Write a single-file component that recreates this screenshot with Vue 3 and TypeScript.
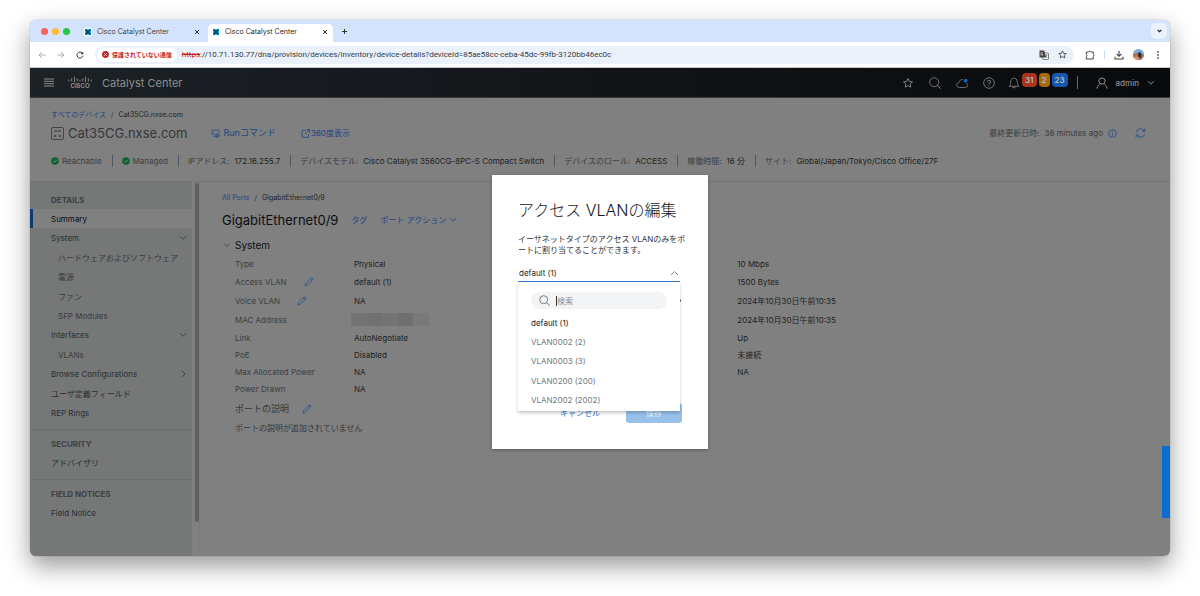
<script setup lang="ts">
import { ref } from 'vue'

interface NavItem { label: string; sub?: boolean; chevron?: 'down' | 'right' }
interface Row { label: string; value: string; extra: string; edit?: boolean; tall?: boolean; masked?: boolean }

const details: NavItem[] = [
  { label: 'Summary' },
  { label: 'System', chevron: 'down' },
  { label: 'ハードウェアおよびソフトウェア', sub: true },
  { label: '電源', sub: true },
  { label: 'ファン', sub: true },
  { label: 'SFP Modules', sub: true },
  { label: 'Interfaces', chevron: 'down' },
  { label: 'VLANs', sub: true },
  { label: 'Browse Configurations', chevron: 'right' },
  { label: 'ユーザ定義フィールド' },
  { label: 'REP Rings' },
]

const rows: Row[] = [
  { label: 'Type', value: 'Physical', extra: '10 Mbps' },
  { label: 'Access VLAN', value: 'default (1)', extra: '1500 Bytes', edit: true, tall: true },
  { label: 'Voice VLAN', value: 'NA', extra: '2024年10月30日午前10:35', edit: true, tall: true },
  { label: 'MAC Address', value: '', extra: '2024年10月30日午前10:35', tall: true, masked: true },
  { label: 'Link', value: 'AutoNegotiate', extra: 'Up' },
  { label: 'PoE', value: 'Disabled', extra: '未接続' },
  { label: 'Max Allocated Power', value: 'NA', extra: 'NA' },
  { label: 'Power Drawn', value: 'NA', extra: '' },
]

const facts = [
  { label: 'IPアドレス:', value: '172.16.255.7' },
  { label: 'デバイスモデル:', value: 'Cisco Catalyst 3560CG-8PC-S Compact Switch' },
  { label: 'デバイスのロール:', value: 'ACCESS' },
  { label: '稼働時間:', value: '16 分' },
  { label: 'サイト:', value: 'Global/Japan/Tokyo/Cisco Office/27F' },
]

const vlans = ['default (1)', 'VLAN0002 (2)', 'VLAN0003 (3)', 'VLAN0200 (200)', 'VLAN2002 (2002)']
const selected = ref(vlans[0])
const query = ref('')
const pick = (v: string) => { selected.value = v }
</script>

<template>
  <div class="desktop">
    <div class="window">
      <div class="tabs">
        <div class="lights"><i class="red"></i><i class="amber"></i><i class="green"></i></div>
        <div v-for="n in 2" :key="n" class="tab" :class="{ active: n === 2 }">
          <svg class="favicon" viewBox="0 0 8 8"><rect width="8" height="8" fill="#fff" /><rect x="1" y="1" width="6" height="6" fill="#12a5d6" /><path d="M1.6 1.6 3.2 3.2M6.4 1.6 4.8 3.2M1.6 6.4 3.2 4.8M6.4 6.4 4.8 4.8" stroke="#0b2a4a" stroke-width="1.2" /><rect x="3" y="3" width="2" height="2" fill="#0b2a4a" /></svg>
          <span class="tab-title">Cisco Catalyst Center</span>
          <button class="plain" aria-label="Close tab"><svg width="6" height="6" viewBox="0 0 6 6"><path d="M1 1l4 4M5 1 1 5" stroke="#333" /></svg></button>
        </div>
        <button class="plain new-tab" aria-label="New tab"><svg width="7" height="7" viewBox="0 0 7 7"><path d="M3.5 1v5M1 3.5h5" stroke="#333" /></svg></button>
        <button class="tab-menu" aria-label="Search tabs"><svg width="5" height="4" viewBox="0 0 5 4"><path d="M.7 1l1.8 1.7L4.3 1" fill="none" stroke="#222" stroke-width="1.2" /></svg></button>
      </div>

      <div class="toolbar">
        <button class="plain" aria-label="Back"><svg width="8" height="8" viewBox="0 0 8 8"><path d="M7.5 4H1M4 1 1 4l3 3" fill="none" stroke="#a5a5a5" stroke-width=".9" /></svg></button>
        <button class="plain" aria-label="Forward"><svg width="8" height="8" viewBox="0 0 8 8"><path d="M.5 4H7M4 1l3 3-3 3" fill="none" stroke="#a5a5a5" stroke-width=".9" /></svg></button>
        <button class="plain" aria-label="Reload"><svg width="8" height="8" viewBox="0 0 8 8"><path d="M6.4 2.2A3 3 0 1 0 7 4.6" fill="none" stroke="#333" /><path d="M7.2.6v2.7H4.5z" fill="#333" /></svg></button>
        <div class="address">
          <button class="insecure"><svg width="7" height="7" viewBox="0 0 7 7"><circle cx="3.5" cy="3.5" r="3.4" fill="#c5221f" /><path d="M2.3 2.3l2.4 2.4M4.7 2.3 2.3 4.7" stroke="#fff" stroke-width=".9" /></svg>保護されていない通信</button>
          <span class="url"><s>https</s>://10.71.130.77/dna/provision/devices/inventory/device-details?deviceId=85ae58cc-ceba-45dc-99fb-3120bb46ec0c</span>
          <button class="plain" aria-label="Translate"><svg width="10" height="10" viewBox="0 0 10 10"><rect x="3.8" y="3" width="5.7" height="6.4" rx=".6" fill="#fff" stroke="#555" stroke-width=".8" /><path d="M.5.5h4.7l2 6.9H.5z" fill="#444" /><path d="M4 3a1.3 1.3 0 1 0 .1 1.6H3" fill="none" stroke="#fff" stroke-width=".6" /><path d="M6.7 5h2M7.7 4.4V5L6.7 7.5M7 6l1.5 1.8" fill="none" stroke="#555" stroke-width=".5" /></svg></button>
          <button class="plain" aria-label="Bookmark"><svg width="9" height="9" viewBox="0 0 9 9"><path d="M4.5.9l1.1 2.4 2.6.3-1.9 1.7.5 2.6-2.3-1.3-2.3 1.3.5-2.6L.8 3.6l2.6-.3z" fill="none" stroke="#333" stroke-width=".8" /></svg></button>
        </div>
        <div class="tools">
          <button class="plain" aria-label="Extensions"><svg width="10" height="10" viewBox="0 0 10 10"><path d="M1.3 2h2.2a1.2 1.2 0 0 1 2.2 0h2.5v2.3a1.2 1.2 0 0 1 0 2.2V9H1.3V6.700a1.300 1.300 0 0 0 0-2.400z" fill="none" stroke="#444" /></svg></button>
          <i class="tool-sep"></i>
          <button class="plain" aria-label="Downloads"><svg width="10" height="10" viewBox="0 0 10 10"><path d="M5 .8v5.4M2.7 4 5 6.3 7.3 4M1 6.8V9h8V6.8" fill="none" stroke="#444" stroke-width="1.1" /></svg></button>
          <button class="plain" aria-label="Profile"><svg width="11" height="11" viewBox="0 0 11 11"><defs><clipPath id="face"><circle cx="5.5" cy="5.5" r="5.5" /></clipPath></defs><g clip-path="url(#face)"><rect width="11" height="11" fill="#79a9da" /><path d="M0 5.3 4 4l7 1.8V11H0z" fill="#b46e4e" /><path d="M4.8 4.5 6.5 3l1.7 1.3.5 2.7L7.3 9.5 5.5 7.5z" fill="#302d3b" /><path d="M0 8.5 4.5 7.5 6 11H0z" fill="#d69b7d" /></g></svg></button>
          <button class="plain more" aria-label="Menu"><svg width="4" height="10" viewBox="0 0 4 10"><circle cx="2" cy="2" r=".8" /><circle cx="2" cy="5" r=".8" /><circle cx="2" cy="8" r=".8" /></svg></button>
        </div>
      </div>

      <div class="app">
        <header class="topbar">
          <button class="plain" aria-label="Navigation"><svg width="10" height="9" viewBox="0 0 10 9"><path d="M0 1h10M0 3.3h10M0 5.7h10M0 8h10" stroke="#8b8d8f" /></svg></button>
          <div class="logo">
            <svg width="24" height="7" viewBox="0 0 24 7"><path d="M.8 4v1M3.6 2.7v2.3M6.4 1v4.8M9.2 2.7v2.3M12 4v1M14.8 2.7v2.3M17.6 1v4.8M20.4 2.7v2.3M23.2 4v1" stroke="#85878a" stroke-width="1" stroke-linecap="round" /></svg>
            <span>CISCO</span>
          </div>
          <span class="product">Catalyst Center</span>
          <div class="top-icons">
            <button class="plain" aria-label="Favorites"><svg width="12" height="12" viewBox="0 0 12 12"><path d="M6 1.5l1.3 3 3.2.3-2.4 2.2.7 3.2L6 8.6l-2.8 1.6.7-3.2-2.4-2.2 3.2-.3z" fill="none" stroke="#8a8c8e" stroke-width=".9" /></svg></button>
            <button class="plain" aria-label="Search"><svg width="12" height="12" viewBox="0 0 12 12"><circle cx="5.2" cy="5.2" r="4.5" fill="none" stroke="#8a8c8e" stroke-width=".8" /><path d="M8.5 8.5l3.2 3.2" stroke="#8a8c8e" /></svg></button>
            <button class="plain" aria-label="Cloud"><svg width="12" height="12" viewBox="0 0 12 12"><path d="M6.9 2.6A3.2 3.2 0 0 0 3.1 5.5 2.5 2.5 0 0 0 3.3 10.5h6A2.4 2.4 0 0 0 10.8 6.2" fill="none" stroke="#7e8082" stroke-width=".8" /><circle cx="9.7" cy="3.7" r="1.9" fill="#1460bd" /></svg></button>
            <button class="plain" aria-label="Help"><svg width="12" height="12" viewBox="0 0 12 12"><circle cx="6" cy="6" r="5.3" fill="none" stroke="#8a8c8e" stroke-width=".8" /><path d="M4.4 4.9A1.6 1.6 0 1 1 6 6.4v.9M6 8.2v1" fill="none" stroke="#8a8c8e" stroke-width=".9" /></svg></button>
            <button class="plain alerts" aria-label="Notifications"><svg width="12" height="12" viewBox="0 0 12 12"><path d="M1 9.3c1.5-1 1.5-2.3 1.7-4.3C2.9 2.5 4 1.1 6 1.1S9.1 2.5 9.3 5c.2 2 .2 3.3 1.7 4.3zM4.6 9.5a1.4 1.4 0 0 0 2.8 0" fill="none" stroke="#8a8c8e" stroke-width=".8" /></svg><span class="badges"><b class="b-red">31</b><b class="b-amber">2</b><b class="b-blue">23</b></span></button>
            <i class="top-sep"></i>
            <button class="plain user"><svg width="12" height="12" viewBox="0 0 12 12"><circle cx="6" cy="4" r="3.1" fill="none" stroke="#9a9c9e" stroke-width=".9" /><path d="M.9 11.6C1.5 8.9 3 7.3 4.4 6.7M11.1 11.6C10.5 8.9 9 7.3 7.6 6.7" fill="none" stroke="#9a9c9e" stroke-width=".9" /></svg><span>admin</span><svg width="8" height="6" viewBox="0 0 8 6"><path d="M1 1.2l3 3 3-3" fill="none" stroke="#9a9c9e" stroke-width=".9" /></svg></button>
          </div>
        </header>

        <section class="device">
          <nav class="crumbs"><a href="#">すべてのデバイス</a><span>/</span><span class="here">Cat35CG.nxse.com</span></nav>
          <div class="device-title">
            <svg width="13" height="13" viewBox="0 0 13 13"><rect x=".5" y=".5" width="12" height="12" rx="1.5" fill="none" stroke="#3b3e41" stroke-width=".9" /><path d="M3 4h2.5M7.5 4H10M3 9h2.5M7.5 9H10" stroke="#3b3e41" stroke-width=".8" /><path d="M4.6 2.5 6.3 4 4.6 5.5zM8.7 2.5 7 4l1.7 1.5zM4.5 7.5 2.7 9l1.8 1.5zM8.6 7.5 10.4 9l-1.8 1.5z" fill="#3b3e41" /></svg>
            <h1>Cat35CG.nxse.com</h1>
            <a class="run" href="#"><svg width="9" height="9" viewBox="0 0 9 9"><path d="M3.5 5.5H1V1h7v3" fill="none" stroke="#1d4680" stroke-width=".7" /><path d="M2.4 3.5 4 4.7M4.5 6l1 1.5M2.500 7.500h2" stroke="#1d4680" stroke-width=".7" /><circle cx="6.5" cy="6.5" r="1.8" fill="#4b6483" stroke="#1d4680" stroke-width=".7" /></svg>Runコマンド</a>
            <a class="view360" href="#"><svg width="9" height="9" viewBox="0 0 9 9"><path d="M4.5 1.5H1v6.8h6.5V5M5.5.6h3v3M8.4.7 4 5" fill="none" stroke="#1d4680" stroke-width=".8" /></svg>360度表示</a>
            <div class="updated">最終更新日時:<span>36 minutes ago</span>
              <svg width="9" height="9" viewBox="0 0 9 9"><circle cx="4.5" cy="4.5" r="3.8" fill="none" stroke="#1a4d8c" stroke-width=".8" /><path d="M4.5 4v2.5M4.5 2.4v.9" stroke="#1a4d8c" stroke-width=".8" /></svg>
              <button class="plain" aria-label="Refresh"><svg width="11" height="10" viewBox="0 0 11 10"><path d="M1.3 4.2A4.2 4.2 0 0 1 9 2.7M9.7 5.8A4.2 4.2 0 0 1 2 7.3M9.9.3v2.9H7M1.1 9.7V6.8H4" fill="none" stroke="#1a4d8c" stroke-width=".8" /></svg></button>
            </div>
          </div>
          <div class="facts">
            <span v-for="s in ['Reachable', 'Managed']" :key="s" class="fact state"><svg width="8" height="8" viewBox="0 0 8 8"><circle cx="4" cy="4" r="3.8" fill="#0c6230" /><path d="M2.2 4l1.3 1.3 2.3-2.5" fill="none" stroke="#7d9c86" stroke-width=".9" /></svg>{{ s }}</span>
            <span v-for="f in facts" :key="f.label" class="fact">{{ f.label }}<em>{{ f.value }}</em></span>
          </div>
        </section>

        <div class="body">
          <aside class="side">
            <h2>DETAILS</h2>
            <ul class="nav">
              <li v-for="(d, i) in details" :key="d.label" :class="{ current: i === 0 }">
                <a href="#" :class="{ sub: d.sub }">{{ d.label }}</a>
                <svg v-if="d.chevron === 'down'" width="8" height="6" viewBox="0 0 8 6"><path d="M1 1.3l3 3 3-3" fill="none" stroke="#34373a" stroke-width=".8" /></svg>
                <svg v-if="d.chevron === 'right'" width="8" height="8" viewBox="0 0 8 8"><path d="M3 1l3 3-3 3" fill="none" stroke="#34373a" stroke-width=".8" /></svg>
              </li>
            </ul>
            <div class="group"><h2>SECURITY</h2><a href="#">アドバイザリ</a></div>
            <div class="group"><h2>FIELD NOTICES</h2><a href="#">Field Notice</a></div>
          </aside>
          <div class="scroll"><i></i></div>

          <main class="content">
            <nav class="crumbs"><a href="#">All Ports</a><span>/</span><span class="here">GigabitEthernet0/9</span></nav>
            <div class="port">
              <h2>GigabitEthernet0/9</h2>
              <a href="#">タグ</a>
              <a href="#" class="action">ポート アクション<svg width="8" height="6" viewBox="0 0 8 6"><path d="M1 1.2l3 3 3-3" fill="none" stroke="#1d4680" stroke-width=".9" /></svg></a>
            </div>
            <h3><svg width="6" height="5" viewBox="0 0 6 5"><path d="M.6 1l2.4 2.4L5.4 1" fill="none" stroke="#34373a" stroke-width=".8" /></svg>System</h3>
            <table>
              <tbody>
                <tr v-for="r in rows" :key="r.label" :class="{ tall: r.tall }">
                  <th scope="row"><div class="cell">{{ r.label }}<button v-if="r.edit" class="plain" :aria-label="'Edit ' + r.label"><svg width="10" height="10" viewBox="0 0 10 10"><path d="M1 9l.7-2.5L7 1.2q.9-.7 1.5.2.8.7.2 1.4L3.4 8.2zM6.2 2l1.7 1.7" fill="none" stroke="#1f4f8f" stroke-width=".8" /></svg></button></div></th>
                  <td><span v-if="r.masked" class="mask"><i v-for="k in 5" :key="k"></i></span><template v-else>{{ r.value }}</template></td>
                  <td>{{ r.extra }}</td>
                </tr>
              </tbody>
            </table>
            <div class="desc">
              <h4>ポートの説明<button class="plain" aria-label="Edit description"><svg width="10" height="10" viewBox="0 0 10 10"><path d="M1 9l.7-2.5L7 1.2q.9-.7 1.5.2.8.7.2 1.4L3.4 8.2zM6.2 2l1.7 1.7" fill="none" stroke="#1f4f8f" stroke-width=".8" /></svg></button></h4>
              <p>ポートの説明が追加されていません</p>
            </div>
          </main>
        </div>

        <button class="feedback" aria-label="Feedback"></button>

        <div class="overlay">
          <div class="modal" role="dialog" aria-labelledby="dlg-title">
            <h2 id="dlg-title">アクセス VLANの編集</h2>
            <p>イーサネットタイプのアクセス VLANのみをポ<br>ートに割り当てることができます。</p>
            <div class="picker">
              <button class="value" role="combobox" aria-expanded="true" aria-controls="vlan-list">{{ selected }}<svg width="9" height="6" viewBox="0 0 9 6"><path d="M1 5l3.5-3.5L8 5" fill="none" stroke="#6b7075" stroke-width=".8" /></svg></button>
              <div class="menu">
                <label class="search"><svg width="11" height="11" viewBox="0 0 11 11"><circle cx="4.7" cy="4.7" r="4" fill="none" stroke="#6b7075" stroke-width=".9" /><path d="M7.6 7.6l3 3" stroke="#6b7075" stroke-width=".9" /></svg><i class="caret"></i><input v-model="query" type="text" placeholder="検索" aria-label="検索"></label>
                <ul id="vlan-list" role="listbox">
                  <li v-for="v in vlans" :key="v" role="option" :aria-selected="v === selected" :class="{ on: v === selected }" @click="pick(v)">{{ v }}</li>
                </ul>
              </div>
              <i class="dot"></i>
            </div>
            <div class="buttons"><button class="cancel">キャンセル</button><button class="save">保存</button></div>
          </div>
        </div>
      </div>
    </div>
  </div>
</template>

<style>
body { margin: 0; background: #fff; }
</style>

<style scoped>
* { box-sizing: border-box; }
.desktop { min-height: 100vh; padding: 20px 30px 40px; display: flex; font: 8px/12px "Inter", "Noto Sans CJK JP", sans-serif; color: #2d3033; }
.window { flex: 1; display: flex; flex-direction: column; border-radius: 6px; overflow: hidden; background: #fff; box-shadow: 0 0 1px rgba(0,0,0,.5), 0 10px 24px rgba(0,0,0,.4); }
svg { display: block; flex: none; }
h1, h2, h3, h4, p, ul { margin: 0; padding: 0; list-style: none; font-weight: 400; }
a { color: #1d4680; text-decoration: none; }
button { font: inherit; color: inherit; cursor: pointer; }
.plain { display: flex; align-items: center; padding: 0; border: 0; background: none; }

.tabs { height: 22px; display: flex; align-items: center; background: #d3e3fd; padding: 0 3px 0 11px; font-size: 7px; }
.lights { display: flex; gap: 4px; width: 39px; }
.lights i { width: 7px; height: 7px; border-radius: 50%; }
.red { background: #ff5f57; } .amber { background: #febc2e; } .green { background: #28c840; }
.tab { width: 128px; height: 18px; align-self: flex-end; display: flex; align-items: center; padding: 0 8px 3px 4px; gap: 5px; color: #3c4043; }
.tab.active { width: 125px; background: #fff; border-radius: 5px 5px 0 0; color: #1f1f1f; padding-right: 5px; }
.tab-title { flex: 1; }
.favicon { width: 8px; height: 8px; }
.new-tab { margin-left: 8px; }
.tab-menu { margin-left: auto; width: 16px; height: 16px; border: 0; border-radius: 5px; background: #ebf1fd; display: flex; align-items: center; justify-content: center; padding: 0; }

.toolbar { height: 26px; display: flex; align-items: center; padding: 0 10px 0 8px; gap: 11px; border-bottom: 1px solid #c8c8c8; }
.address { flex: 1; height: 18px; border-radius: 9px; background: #ebf1fb; display: flex; align-items: center; padding: 0 7px 0 2px; gap: 9px; font-size: 7px; }
.insecure { height: 14px; border: 0; border-radius: 7px; background: #fff; color: #c5221f; display: flex; align-items: center; gap: 3px; padding: 0 5px; font-size: 6px; font-weight: 700; }
.url { flex: 1; color: #37393c; margin-left: -4px; font: 8px/12px "Roboto", sans-serif; white-space: nowrap; }
.url s { color: #c5221f; }
.tools { display: flex; align-items: center; gap: 9px; }
.more { margin-left: 3px; }
.tool-sep { width: 1px; height: 9px; background: #c6dafb; }

.app { flex: 1; position: relative; display: flex; flex-direction: column; background: #808080; }
.topbar { height: 30px; display: flex; align-items: center; padding: 0 15px 0 14px; background: linear-gradient(90deg, #1c2226, #121418 50%, #080a0b); border-bottom: 1px solid #3a3a3a; color: #8e9092; }
.logo { margin: 0 10px 0 14px; display: flex; flex-direction: column; align-items: center; font: 700 6px/6px "Inter", sans-serif; }
.product { font-size: 11px; }
.top-icons { margin-left: auto; display: flex; align-items: center; gap: 15px; }
.alerts { gap: 2px; margin-left: -2px; }
.badges { display: flex; gap: 2px; margin-bottom: 5px; }
.badges b { height: 14px; padding: 0 3px; border-radius: 4px; color: #b8babb; font-size: 8px; font-weight: 600; line-height: 14px; }
.b-red { background: #a93521; } .b-amber { background: #a8690c; } .b-blue { background: #1659ac; }
.top-sep { width: 1px; height: 13px; background: #66686a; margin: 0 3px 0 -6px; }
.user { gap: 8px; font-weight: 500; }

.device { height: 84px; border-bottom: 1px solid #747474; padding: 11px 21px 0; display: flex; flex-direction: column; color: #3b3e41; }
.crumbs { display: flex; gap: 5px; font-size: 7px; }
.here { color: #202326; }
.device-title { display: flex; align-items: center; height: 24px; }
h1 { font-size: 13px; line-height: 20px; margin-left: 4px; color: #34373a; }
.run, .view360 { display: flex; align-items: center; gap: 4px; font-size: 9px; margin-left: 23px; }
.view360 { font-size: 8px; gap: 1px; margin-left: 25px; }
.updated { margin-left: auto; display: flex; align-items: center; gap: 5px; padding-right: 3px; }
.updated .plain { margin-left: 13px; }
.facts { display: flex; align-items: center; margin-top: 10px; }
.fact { display: flex; align-items: center; gap: 5px; white-space: nowrap; }
.fact + .fact { margin-left: 10px; padding-left: 9px; border-left: 1px solid #55585a; }
.fact.state { gap: 3px; }
em { font-style: normal; color: #1c1f21; }

.body { flex: 1; display: flex; }
.side { width: 162px; background: #757877; padding-top: 11px; }
.side h2 { padding-left: 21px; font-size: 8px; font-weight: 700; line-height: 14px; color: #3d4043; }
.nav { margin-top: 2px; min-height: 214px; display: grid; grid-auto-rows: 1fr; }
.nav li { display: flex; align-items: center; justify-content: space-between; padding: 0 5px 0 21px; }
.side a { color: #2b2e31; }
.side a.sub { padding-left: 7px; color: #383b3e; }
.nav .current { background: #808080; border-left: 3px solid #0e3a73; padding-left: 18px; }
.nav .current a { color: #0c0e10; }
.group { border-top: 1px solid #6a6d6c; margin-top: 6px; padding-top: 7px; height: 44px; }
.group a { display: block; padding: 6px 0 0 21px; }
.scroll { width: 8px; padding: 1px 1px 0 3px; border-right: 1px solid #7a7a7a; }
.scroll i { display: block; width: 4px; height: 339px; border-radius: 2px; background: #5f5f5f; }

.content { flex: 1; padding: 10px 0 0 22px; }
.port { display: flex; align-items: center; height: 32px; gap: 13px; }
.port h2 { font-size: 13px; color: #0c0e10; }
.action { display: flex; gap: 3px; align-items: center; }
h3 { display: flex; align-items: center; gap: 5px; font-size: 10px; color: #0c0e10; height: 18px; padding-left: 2px; }
table { border-collapse: collapse; width: calc(100% - 13px); margin: 1px 0 0 13px; table-layout: fixed; }
th, td { padding: 0; height: 17px; text-align: left; font-weight: 400; color: #1c1f21; }
.tall th, .tall td { height: 19px; }
th { width: 119px; color: #3b3e41; }
td:nth-child(2) { width: 41%; }
.cell { display: flex; align-items: center; gap: 17px; }
.mask { display: flex; width: 78px; height: 13px; margin-left: -3px; }
.mask i { flex: 1; background: #747474; }
.mask i:nth-child(2) { background: #717171; } .mask i:nth-child(4) { background: #6f6f6f; } .mask i:nth-child(5) { background: #797979; }
.desc { padding: 1px 0 0 13px; color: #34373a; }
h4 { display: flex; align-items: center; gap: 13px; font-size: 9px; height: 22px; }
.desc p { line-height: 16px; }

.feedback { position: absolute; right: 0; bottom: 38px; width: 8px; height: 72px; border: 0; padding: 0; background: #0d6cd0; z-index: 2; }

.overlay { position: absolute; inset: 0; display: flex; align-items: center; justify-content: center; }
.modal { width: 216px; background: #fff; padding: 24px 28px 26px 26px; box-shadow: 0 1px 3px rgba(0,0,0,.3); }
.modal h2 { font: 300 16px/22px "Inter", "Noto Sans CJK JP", sans-serif; color: #16181a; white-space: nowrap; }
.modal p { margin-top: 13px; line-height: 11px; white-space: nowrap; color: #2d3033; }
.picker { position: relative; margin-top: 9px; }
.value { display: flex; width: 100%; height: 17px; align-items: center; justify-content: space-between; border: 0; border-bottom: 1px solid #2f74cc; background: #fff; padding: 0 1px; color: #1c1f21; }
.menu { position: absolute; top: 17px; left: 0; right: 0; padding: 10px 13px 1px; background: #fff; box-shadow: 0 2px 3px rgba(0,0,0,.22); clip-path: inset(0 -4px -6px -4px); z-index: 1; }
.search { display: flex; align-items: center; height: 17px; border-radius: 9px; background: #f2f4f6; padding: 0 8px; }
.caret { width: 1px; height: 10px; background: #333; margin-left: 6px; }
.search input { flex: 1; min-width: 0; border: 0; padding: 0; background: none; outline: 0; font: inherit; color: #333; }
.search input::placeholder { color: #8b9096; opacity: 1; }
.menu ul { margin-top: 4px; min-height: 97px; display: grid; grid-auto-rows: 1fr; }
.menu li { display: flex; align-items: center; color: #72777c; cursor: pointer; }
.menu li.on { color: #16181a; }
.dot { position: absolute; right: -1px; top: 34px; width: 3px; height: 3px; border-radius: 2px; background: #555; }
.buttons { margin: 121px -2px 0 0; display: flex; justify-content: flex-end; gap: 26px; }
.cancel { border: 0; background: none; padding: 0; color: #2f78cf; }
.save { width: 56px; height: 20px; border: 0; border-radius: 3px; background: #98c1ea; color: #eef5fc; padding: 0; }
</style>
